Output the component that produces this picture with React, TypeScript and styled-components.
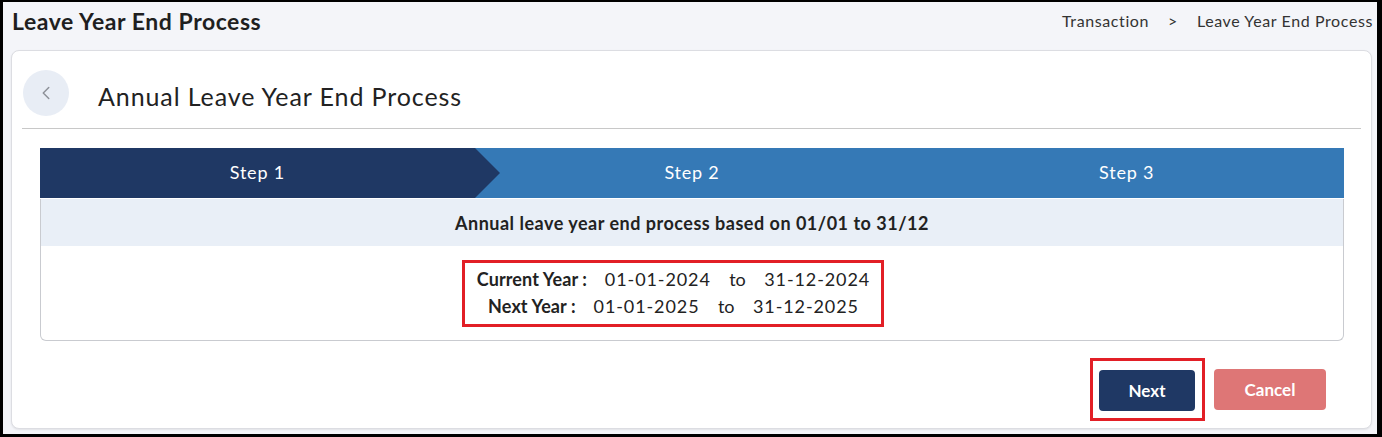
import React from "react";
import styled, { createGlobalStyle } from "styled-components";
import { ChevronLeft } from "lucide-react";

const GlobalStyle = createGlobalStyle`
  html, body {
    margin: 0;
    padding: 0;
    background: #000;
  }
  body {
    font-family: "Lato", "Open Sans", sans-serif;
    color: #222;
  }
`;

const Frame = styled.div`
  margin: 2px 5px 0 3px;
  height: 432px;
  background: #f4f5f9;
  box-sizing: border-box;
  padding: 0 4px 0 8px;
  display: flex;
  flex-direction: column;
`;

const TopBar = styled.div`
  height: 48px;
  display: flex;
  align-items: flex-start;
  justify-content: space-between;
  padding-top: 4px;
  box-sizing: border-box;
`;

const PageTitle = styled.h1`
  margin: 0 0 0 1px;
  font-size: 23px;
  line-height: 30px;
  font-weight: 700;
  letter-spacing: 0.55px;
  color: #1f1f1f;
`;

const Crumbs = styled.div`
  display: flex;
  gap: 19px;
  font-size: 16px;
  line-height: 30px;
  letter-spacing: 0.6px;
  color: #333;
`;

const Card = styled.div`
  background: #fff;
  border: 1px solid #dcdde2;
  border-radius: 8px;
  box-shadow: 0 1px 2px rgba(0, 0, 0, 0.08);
  height: 379px;
  box-sizing: border-box;
  padding: 19px 10px 0 10px;
  margin-right: 1px;
  display: flex;
  flex-direction: column;
`;

const CardHeader = styled.div`
  display: flex;
  align-items: center;
  gap: 29px;
  padding: 0 0 12px 1px;
  border-bottom: 1px solid #c8c8c8;
`;

const BackButton = styled.button`
  width: 46px;
  height: 46px;
  border-radius: 50%;
  border: none;
  background: #e8edf5;
  display: flex;
  align-items: center;
  justify-content: center;
  color: #8d9098;
  padding: 0;
  cursor: pointer;
`;

const CardTitle = styled.h2`
  margin: 6px 0 0 0;
  font-size: 25px;
  line-height: 32px;
  font-weight: 400;
  letter-spacing: 0.9px;
  color: #222;
`;

const Body = styled.div`
  padding: 19px 17px 0 18px;
  display: flex;
  flex-direction: column;
`;

const Stepper = styled.div`
  display: flex;
  height: 50px;
  background: #3579b6;
`;

const Step = styled.div<{ $active?: boolean }>`
  flex: 1;
  position: relative;
  display: flex;
  align-items: center;
  justify-content: center;
  padding-bottom: 2px;
  color: #fff;
  font-size: 18px;
  letter-spacing: 0.8px;
  background: ${(p) => (p.$active ? "#1f3864" : "transparent")};

  &::after {
    content: "";
    display: ${(p) => (p.$active ? "block" : "none")};
    position: absolute;
    top: 0;
    right: -25px;
    border-top: 25px solid transparent;
    border-bottom: 25px solid transparent;
    border-left: 25px solid #1f3864;
    z-index: 1;
  }
`;

const InfoBox = styled.div`
  margin-top: 1px;
  border: 1px solid #c9cbd0;
  border-top: none;
  border-radius: 0 0 6px 6px;
  overflow: hidden;
`;

const InfoHead = styled.div`
  background: #e9eff7;
  height: 47px;
  display: flex;
  align-items: center;
  justify-content: center;
  font-size: 18px;
  font-weight: 700;
  letter-spacing: 0.5px;
  color: #222;
`;

const InfoBody = styled.div`
  height: 94px;
  display: flex;
  align-items: center;
  justify-content: center;
`;

const Highlight = styled.div`
  border: 3px solid #e21f26;
  padding: 3px 11px 4px 12px;
  margin-right: 38px;
  display: flex;
  flex-direction: column;
  align-items: center;
`;

const YearRow = styled.div`
  font-size: 18px;
  line-height: 27px;
  color: #222;
  white-space: pre;
`;

const Label = styled.span`
  font-weight: 700;
  letter-spacing: 0.1px;
  margin-right: 4px;
`;

const Date = styled.span`
  letter-spacing: 0.9px;
`;

const Actions = styled.div`
  display: flex;
  justify-content: flex-end;
  align-items: center;
  padding: 17px 18px 0 0;
`;

const Marked = styled.div`
  border: 3px solid #e21f26;
  padding: 9px 7px 7px 6px;
  margin-right: 9px;
  display: flex;
`;

const Button = styled.button<{ $variant: "primary" | "danger" }>`
  height: 41px;
  border: none;
  border-radius: 4px;
  font-family: inherit;
  font-size: 17px;
  font-weight: 700;
  color: #fff;
  width: ${(p) => (p.$variant === "primary" ? "96px" : "112px")};
  background: ${(p) => (p.$variant === "primary" ? "#1f3864" : "#de7676")};
  cursor: pointer;
`;

const years = [
  { label: "Current Year :", from: "01-01-2024", to: "31-12-2024" },
  { label: "Next Year :", from: "01-01-2025", to: "31-12-2025" },
];

export default function App() {
  return (
    <>
      <GlobalStyle />
      <Frame>
        <TopBar>
          <PageTitle>Leave Year End Process</PageTitle>
          <Crumbs>
            <span>Transaction</span>
            <span>&gt;</span>
            <span>Leave Year End Process</span>
          </Crumbs>
        </TopBar>
        <Card>
          <CardHeader>
            <BackButton aria-label="back">
              <ChevronLeft size={22} strokeWidth={1.6} />
            </BackButton>
            <CardTitle>Annual Leave Year End Process</CardTitle>
          </CardHeader>
          <Body>
            <Stepper>
              <Step $active>Step 1</Step>
              <Step>Step 2</Step>
              <Step>Step 3</Step>
            </Stepper>
            <InfoBox>
              <InfoHead>Annual leave year end process based on 01/01 to 31/12</InfoHead>
              <InfoBody>
                <Highlight>
                  {years.map((y) => (
                    <YearRow key={y.label}>
                      <Label>{y.label}</Label>
                      {"   "}
                      <Date>{y.from}</Date>
                      {"    to    "}
                      <Date>{y.to}</Date>
                    </YearRow>
                  ))}
                </Highlight>
              </InfoBody>
            </InfoBox>
            <Actions>
              <Marked>
                <Button $variant="primary">Next</Button>
              </Marked>
              <Button $variant="danger">Cancel</Button>
            </Actions>
          </Body>
        </Card>
      </Frame>
    </>
  );
}
